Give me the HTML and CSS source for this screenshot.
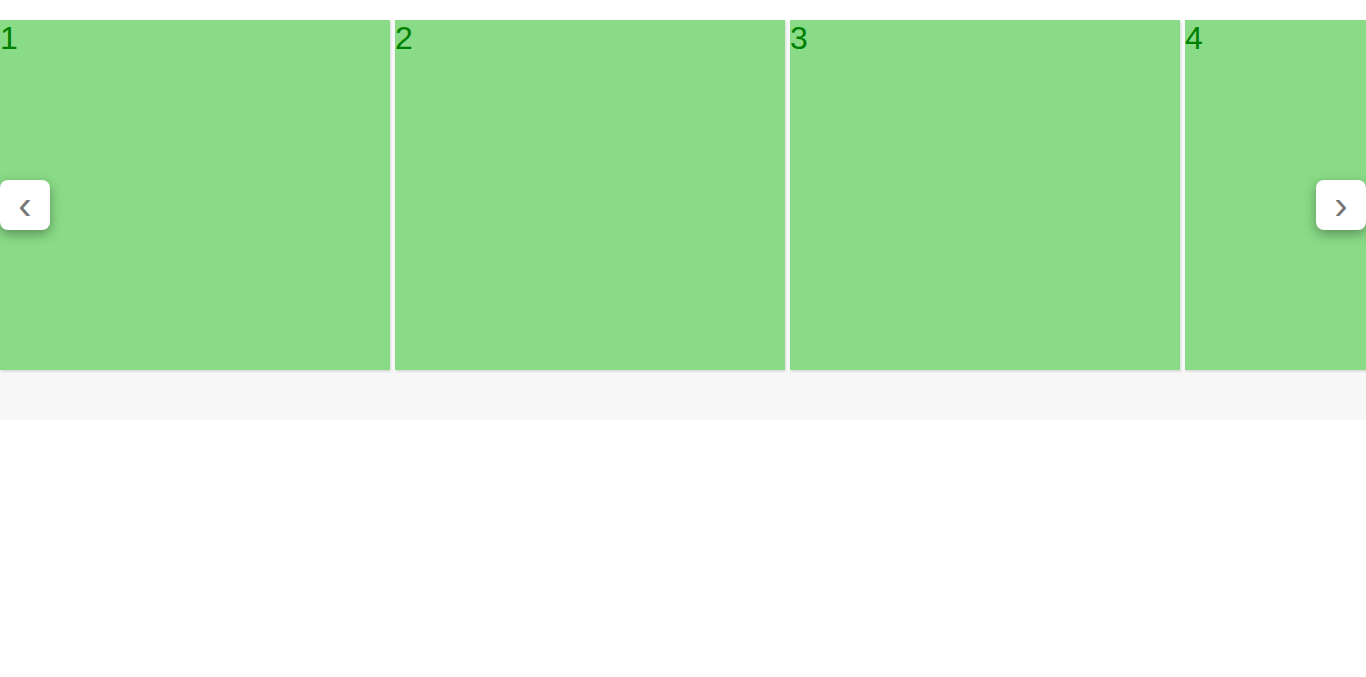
FILE: index.html
```html
<!DOCTYPE html>
<html>
<head>
<meta charset="utf-8">
<link rel="stylesheet" href="styles.css">
</head>
<body>
<div class="slider">
  <div class="track">
    <div class="card">1</div>
    <div class="card">2</div>
    <div class="card">3</div>
    <div class="card">4</div>
  </div>
  <button class="nav prev">‹</button>
  <button class="nav next">›</button>
</div>
</body>
</html>
```
FILE: styles.css
```css
html, body {
  margin: 0;
  padding: 0;
  background: #ffffff;
  font-family: "Liberation Sans", Arial, sans-serif;
}
body {
  padding-top: 20px;
  overflow: hidden;
}
.slider {
  position: relative;
  height: 400px;
  background: #f7f7f7;
  overflow: hidden;
}
.track {
  display: flex;
  gap: 5px;
  height: 350px;
  background: #ffffff;
}
.card {
  flex: 0 0 390px;
  height: 350px;
  background: #89db87;
  color: #008000;
  font-size: 32px;
  box-shadow: 1px 1px 3px rgba(0,0,0,0.18);
}
.nav {
  position: absolute;
  top: 160px;
  width: 50px;
  height: 50px;
  border: none;
  border-radius: 8px;
  background: #ffffff;
  color: #777777;
  font-family: "Liberation Sans", Arial, sans-serif;
  font-size: 40px;
  line-height: 44px;
  padding: 0;
  box-shadow: 0 4px 12px rgba(0,0,0,0.35);
}
.prev { left: 0; }
.next { right: 0; }
```
